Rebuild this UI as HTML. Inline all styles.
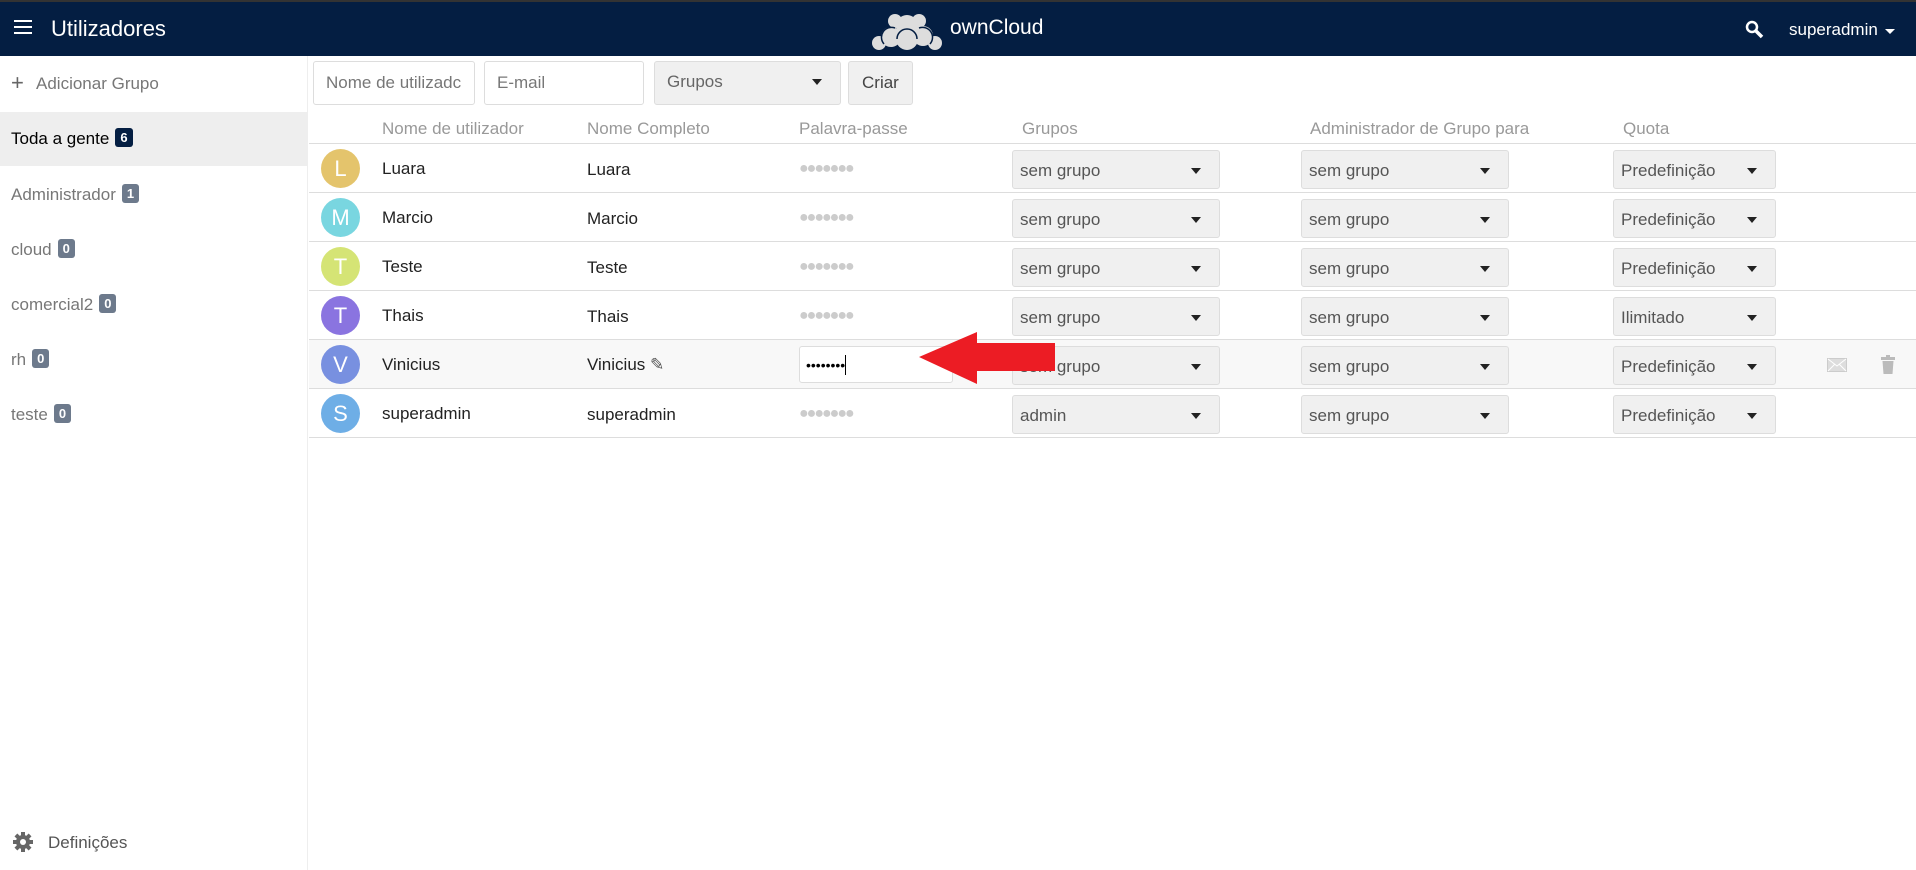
<!DOCTYPE html>
<html><head><meta charset="utf-8"><style>
*{box-sizing:border-box;margin:0;padding:0}
body{width:1916px;height:870px;position:relative;font-family:"Liberation Sans",sans-serif;background:#fff;overflow:hidden;color:#222}
.hdr{position:absolute;left:0;top:0;width:1916px;height:56px;background:#041e42;border-top:2px solid #333}
.abs{position:absolute}
.side{position:absolute;left:0;top:56px;width:308px;height:814px;border-right:1px solid #eee}
.grp{position:absolute;left:11px;font-size:17px;color:#777}
.badge{display:inline-block;background:#6d7a8c;color:#fff;font-size:13px;font-weight:bold;padding:2px 5px;border-radius:3px;margin-left:6px;vertical-align:2px}
.inp{position:absolute;top:61px;height:44px;border:1px solid #ddd;border-radius:3px;font-size:17px;color:#777;padding:11px 12px;background:#fff}
.sel{position:absolute;height:39px;background:#f0f0f0;border:1px solid #ddd;border-radius:3px;font-size:17px;color:#555;padding:10px 7px 6px}
.sel:after{content:"";position:absolute;right:18px;top:17px;border-left:5px solid transparent;border-right:5px solid transparent;border-top:6px solid #222}
.th{position:absolute;top:119px;font-size:17px;color:#999}
.row{position:absolute;left:309px;width:1607px;height:49px;border-bottom:1px solid #ddd}
.av{position:absolute;left:321px;width:39px;height:39px;border-radius:50%;color:#fff;font-size:22px;text-align:center;line-height:39px}
.t{position:absolute;font-size:17px;color:#222}
.pw{position:absolute;left:799px;font-size:16px;color:#ccc;letter-spacing:-2px}
</style></head><body>
<div class="hdr">
 <div class="abs" style="left:14px;top:18px;width:18px;height:2px;background:#fff;box-shadow:0 6px 0 #fff,0 12px 0 #fff"></div>
 <div class="abs" style="left:51px;top:14px;font-size:22px;color:#fff">Utilizadores</div>
 <svg class="abs" style="left:867px;top:6px" width="80" height="44" viewBox="0 0 80 44"><g fill="#ddd"><circle cx="40" cy="18" r="11"/><circle cx="28" cy="13" r="7"/><circle cx="52" cy="13" r="7"/><circle cx="24" cy="29" r="10"/><circle cx="56" cy="28" r="10"/><circle cx="12" cy="35" r="7"/><circle cx="68" cy="35" r="7"/><circle cx="40" cy="31" r="11"/></g><g fill="none" stroke="#041e42" stroke-width="1.5"><path d="M30 31 A10 10 0 0 1 50 31"/><path d="M17 36 A10 10 0 0 1 28 20"/><path d="M63 36 A10 10 0 0 0 52 20"/></g></svg>
 <div class="abs" style="left:950px;top:14px;font-size:21px;color:#fff">ownCloud</div>
 <svg class="abs" style="left:1745px;top:18px" width="20" height="20" viewBox="0 0 20 20"><circle cx="7" cy="7" r="5" fill="none" stroke="#fff" stroke-width="2.5"/><path d="M10.5 10.5 L17 17" stroke="#fff" stroke-width="3.5"/></svg>
 <div class="abs" style="left:1789px;top:18px;font-size:17px;color:#fff">superadmin</div>
 <div class="abs" style="left:1885px;top:27px;border-left:5px solid transparent;border-right:5px solid transparent;border-top:5px solid #fff"></div>
</div>
<div class="side">
 <div class="abs" style="left:11px;top:14px;font-size:22px;color:#666">+</div>
 <div class="abs" style="left:36px;top:18px;font-size:17px;color:#777">Adicionar Grupo</div>
 <div class="abs" style="left:0;top:56px;width:307px;height:54px;background:#eee"></div>
 <div class="grp" style="top:72px;color:#000">Toda a gente<span class="badge" style="background:#041e42">6</span></div>
 <div class="grp" style="top:128px">Administrador<span class="badge">1</span></div>
 <div class="grp" style="top:183px">cloud<span class="badge">0</span></div>
 <div class="grp" style="top:238px">comercial2<span class="badge">0</span></div>
 <div class="grp" style="top:293px">rh<span class="badge">0</span></div>
 <div class="grp" style="top:348px">teste<span class="badge">0</span></div>
 <svg class="abs" style="left:13px;top:776px" width="20" height="20" viewBox="0 0 20 20"><g fill="#666"><circle cx="10" cy="10" r="7"/><rect x="8" y="0" width="4" height="20"/><rect x="0" y="8" width="20" height="4"/><rect x="8" y="0" width="4" height="20" transform="rotate(45 10 10)"/><rect x="8" y="0" width="4" height="20" transform="rotate(-45 10 10)"/></g><circle cx="10" cy="10" r="3" fill="#fff"/></svg>
 <div class="abs" style="left:48px;top:777px;font-size:17px;color:#555">Definições</div>
</div>
<div class="inp" style="left:313px;width:162px">Nome de utilizadc</div>
<div class="inp" style="left:484px;width:160px">E-mail</div>
<div class="sel" style="left:654px;top:61px;width:187px;height:44px;padding:10px 12px;color:#666">Grupos</div>
<div class="inp" style="left:848px;width:65px;background:#f0f0f0;color:#444;padding:11px 13px">Criar</div>
<div class="th" style="left:382px">Nome de utilizador</div>
<div class="th" style="left:587px">Nome Completo</div>
<div class="th" style="left:799px">Palavra-passe</div>
<div class="th" style="left:1022px">Grupos</div>
<div class="th" style="left:1310px">Administrador de Grupo para</div>
<div class="th" style="left:1623px">Quota</div>
<div class="row" style="top:95px;height:49px"></div>

<div class="row" style="top:144px"></div>
<div class="row" style="top:193px"></div>
<div class="row" style="top:242px"></div>
<div class="row" style="top:291px"></div>
<div class="row" style="top:340px;background:#f8f8f8"></div>
<div class="row" style="top:389px"></div>

<div class="av" style="top:149px;background:#e4c46c">L</div>
<div class="av" style="top:198px;background:#79d6e0">M</div>
<div class="av" style="top:247px;background:#d5e475">T</div>
<div class="av" style="top:296px;background:#8a74e0">T</div>
<div class="av" style="top:345px;background:#7890e0">V</div>
<div class="av" style="top:394px;background:#6eaee6">S</div>

<div class="t" style="left:382px;top:159px">Luara</div><div class="t" style="left:587px;top:160px">Luara</div>
<div class="t" style="left:382px;top:208px">Marcio</div><div class="t" style="left:587px;top:209px">Marcio</div>
<div class="t" style="left:382px;top:257px">Teste</div><div class="t" style="left:587px;top:258px">Teste</div>
<div class="t" style="left:382px;top:306px">Thais</div><div class="t" style="left:587px;top:307px">Thais</div>
<div class="t" style="left:382px;top:355px">Vinicius</div><div class="t" style="left:587px;top:355px">Vinicius <span style="color:#555">✎</span></div>
<div class="t" style="left:382px;top:404px">superadmin</div><div class="t" style="left:587px;top:405px">superadmin</div>

<div class="pw" style="top:160px">●●●●●●●</div>
<div class="pw" style="top:209px">●●●●●●●</div>
<div class="pw" style="top:258px">●●●●●●●</div>
<div class="pw" style="top:307px">●●●●●●●</div>
<div class="pw" style="top:405px">●●●●●●●</div>
<div class="abs" style="left:799px;top:346px;width:154px;height:37px;background:#fff;border:1px solid #ddd;border-radius:3px;font-size:14px;padding:8px 6px;color:#000">••••••••<span style="display:inline-block;width:1px;height:20px;background:#000;vertical-align:-5px"></span></div>

<div class="sel" style="left:1012px;top:150px;width:208px">sem grupo</div>
<div class="sel" style="left:1012px;top:199px;width:208px">sem grupo</div>
<div class="sel" style="left:1012px;top:248px;width:208px">sem grupo</div>
<div class="sel" style="left:1012px;top:297px;width:208px">sem grupo</div>
<div class="sel" style="left:1012px;top:346px;width:208px">sem grupo</div>
<div class="sel" style="left:1012px;top:395px;width:208px">admin</div>
<div class="sel" style="left:1301px;top:150px;width:208px">sem grupo</div>
<div class="sel" style="left:1301px;top:199px;width:208px">sem grupo</div>
<div class="sel" style="left:1301px;top:248px;width:208px">sem grupo</div>
<div class="sel" style="left:1301px;top:297px;width:208px">sem grupo</div>
<div class="sel" style="left:1301px;top:346px;width:208px">sem grupo</div>
<div class="sel" style="left:1301px;top:395px;width:208px">sem grupo</div>
<div class="sel" style="left:1613px;top:150px;width:163px">Predefinição</div>
<div class="sel" style="left:1613px;top:199px;width:163px">Predefinição</div>
<div class="sel" style="left:1613px;top:248px;width:163px">Predefinição</div>
<div class="sel" style="left:1613px;top:297px;width:163px">Ilimitado</div>
<div class="sel" style="left:1613px;top:346px;width:163px">Predefinição</div>
<div class="sel" style="left:1613px;top:395px;width:163px">Predefinição</div>

<svg class="abs" style="left:1827px;top:358px" width="20" height="14" viewBox="0 0 20 14"><rect x="0.5" y="0.5" width="19" height="13" fill="#ddd" stroke="#ccc"/><path d="M1 1 L10 8 L19 1 M1 13 L8 6 M19 13 L12 6" stroke="#fff" fill="none"/></svg>
<svg class="abs" style="left:1881px;top:355px" width="14" height="19" viewBox="0 0 14 19"><rect x="5" y="0" width="4" height="2" fill="#bbb"/><rect x="0" y="2" width="14" height="3" fill="#bbb"/><path d="M1.5 6 H12.5 L11.5 19 H2.5 Z" fill="#bbb"/></svg>

<svg class="abs" style="left:915px;top:328px" width="145" height="60" viewBox="0 0 145 60"><path d="M4 29 L62 4 L62 15 L140 15 L140 43 L62 43 L62 56 Z" fill="#ec1c24"/></svg>
</body></html>
